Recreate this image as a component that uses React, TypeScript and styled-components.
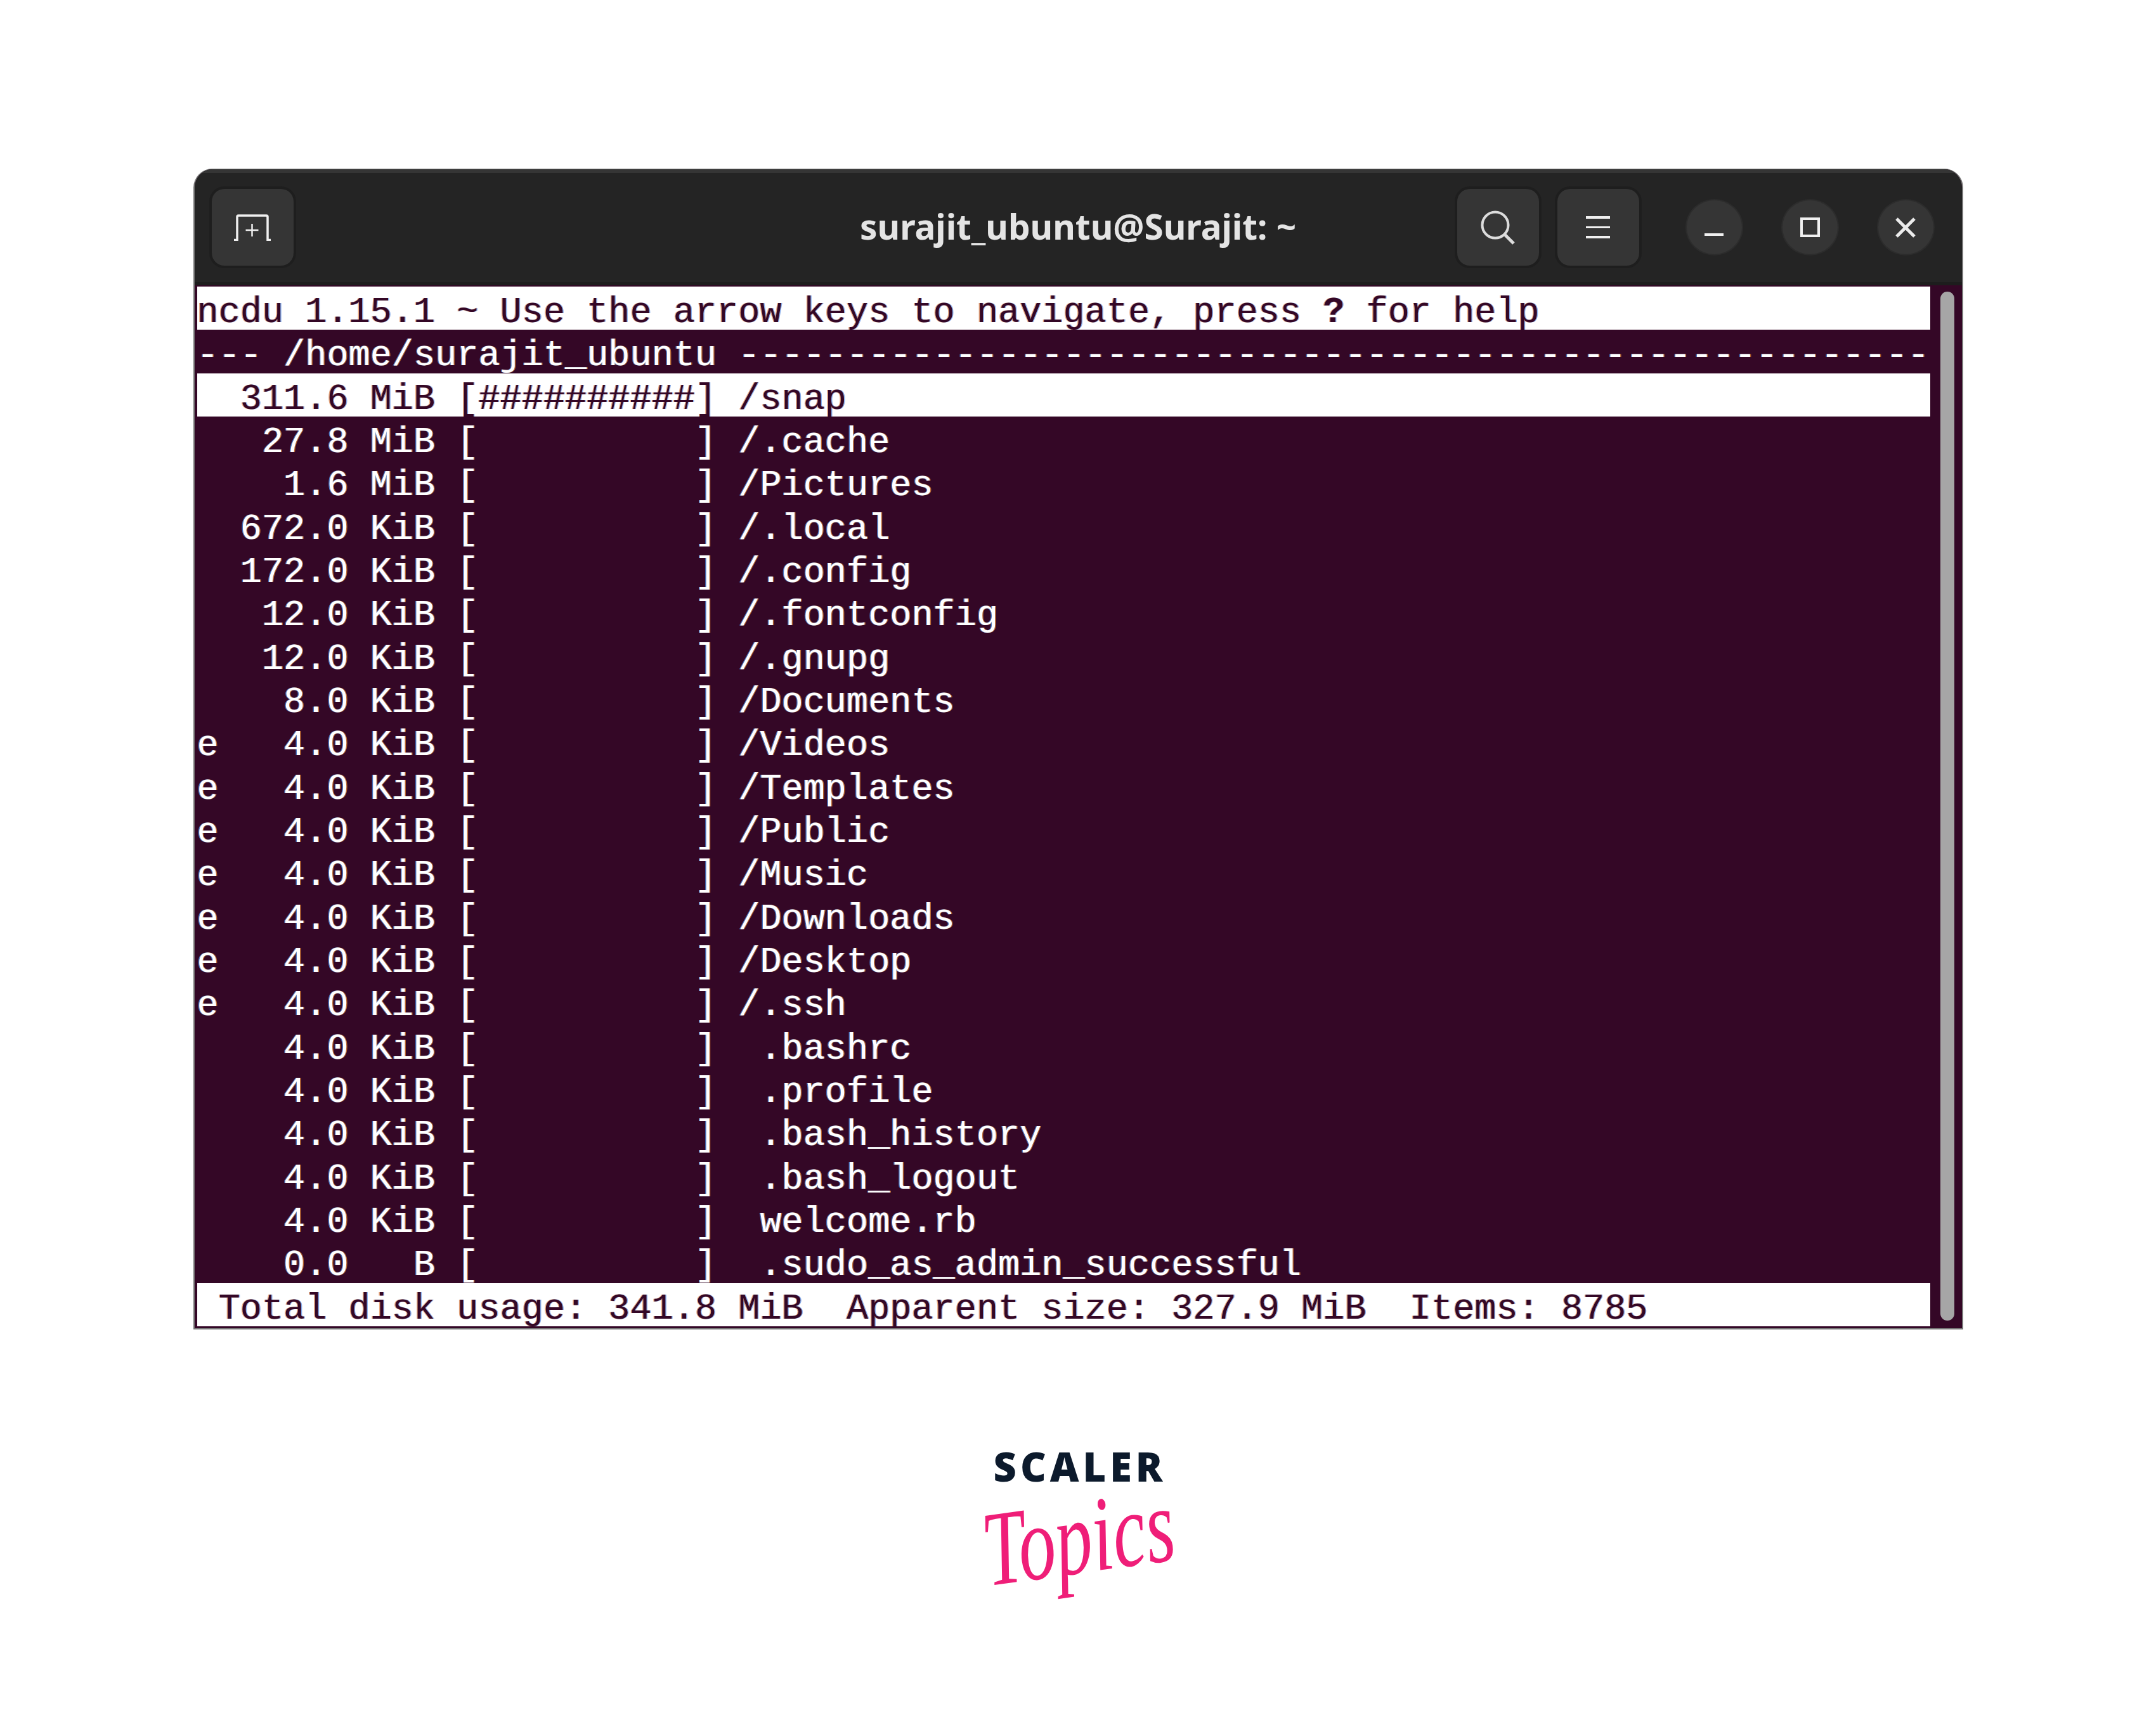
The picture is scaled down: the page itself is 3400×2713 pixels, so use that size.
import React from 'react';
import styled, { createGlobalStyle } from 'styled-components';

const GlobalStyle = createGlobalStyle`
  html, body {
    margin: 0;
    padding: 0;
    background: #fff;
  }
`;

const Page = styled.div`
  width: 3400px;
  height: 2713px;
  padding-top: 266px;
  box-sizing: border-box;
  display: flex;
  flex-direction: column;
  align-items: center;
  overflow: hidden;
`;

const TerminalWindow = styled.div`
  width: 2791px;
  height: 1831px;
  box-sizing: border-box;
  display: flex;
  flex-direction: column;
  border: solid #777;
  border-width: 1px 2px 2px 2px;
  border-radius: 30px 30px 0 0;
  overflow: hidden;
  background: #340726;
`;

const TitleBar = styled.header`
  height: 183px;
  flex: none;
  box-sizing: border-box;
  display: grid;
  grid-template-columns: 1fr auto 1fr;
  align-items: center;
  padding: 0 45px 1px 27px;
  background: #242424;
  border-top: 6px solid #353535;
  border-bottom: 5px solid #1d1d1d;
`;

const TitleLeft = styled.div`
  display: flex;
`;

const TitleRight = styled.div`
  display: flex;
  align-items: center;
  justify-content: flex-end;
`;

const Title = styled.div`
  font-family: 'Noto Sans', 'Open Sans', sans-serif;
  font-weight: 700;
  font-size: 54.8px;
  line-height: 70px;
  padding: 0 0 4px 18px;
  color: #e4e4e4;
  white-space: pre;
`;

const HeaderButton = styled.div<{ $gap?: number }>`
  width: 129px;
  height: 121px;
  margin-left: ${props => props.$gap || 0}px;
  display: flex;
  align-items: center;
  justify-content: center;
  border-radius: 20px;
  background: #353535;
  box-shadow: 0 0 0 4px #1e1e1e;
`;

const WindowControl = styled.div<{ $gap: number }>`
  width: 87px;
  height: 85px;
  margin-left: ${props => props.$gap}px;
  display: flex;
  align-items: center;
  justify-content: center;
  border-radius: 50%;
  background: #353535;
  box-shadow: 0 0 0 2px #2c2c2c;
`;

const TerminalBody = styled.div`
  flex: 1;
  min-height: 0;
  display: flex;
  padding: 2px 12px 2px 4px;
`;

const Screen = styled.div`
  width: 2733px;
  flex: none;
  display: grid;
  grid-auto-rows: 68.33px;
`;

// each row is its own stacking context, so the next row's background hides
// the descenders of the row above, as on a real terminal
const Row = styled.div<{ $light?: boolean }>`
  isolation: isolate;
  font-family: 'Liberation Mono', monospace;
  font-size: 56.92px;
  line-height: 82px;
  height: 68.33px;
  white-space: pre;
  background: ${props => (props.$light ? '#fff' : '#340726')};
  color: ${props => (props.$light ? '#340726' : '#fff')};
  text-shadow: ${props =>
    props.$light
      ? '-1.5px 0 rgba(214, 96, 20, 0.55), 1.5px 0 rgba(40, 110, 220, 0.55)'
      : '-1.5px 0 rgba(80, 160, 255, 0.7), 1.5px 0 rgba(240, 140, 50, 0.7)'};
`;

const Strong = styled.span`
  font-weight: 700;
`;

const ScrollThumb = styled.div`
  width: 22px;
  margin: 8px 0 10px 16px;
  background: #a6a6a6;
  border-radius: 11px;
`;

const Logo = styled.div`
  margin-top: 182px;
  display: flex;
  flex-direction: column;
  align-items: center;
`;

const LogoTop = styled.div`
  font-family: 'Open Sans', 'Noto Sans', sans-serif;
  font-weight: 800;
  font-size: 63px;
  line-height: 68px;
  letter-spacing: 6px;
  margin-right: -6px;
  color: #0c1a2c;
`;

const LogoScript = styled.div`
  font-family: 'Liberation Serif', serif;
  font-style: italic;
  font-size: 168px;
  line-height: 170px;
  margin-top: -8px;
  color: #ef1e78;
  transform: rotate(-8deg) scaleX(0.7);
`;

const NewTabIcon = () => (
  <svg width="58" height="42" viewBox="0 0 58 42" fill="none" stroke="#f0f0f0">
    <path d="M0 40.500h5V4c0-1 .5-2 2-2h44c1.500 0 2 1 2 2v36.500h5" strokeWidth="3.500" />
    <path d="M28.500 15v20M18.500 25h20" strokeWidth="2.500" />
  </svg>
);

const SearchIcon = () => (
  <svg width="54" height="54" viewBox="0 0 54 54" fill="none" stroke="#dcdcdc" strokeWidth="4">
    <circle cx="23" cy="23" r="20.500" />
    <path d="M38 38l14 14" strokeWidth="5" />
  </svg>
);

const MenuIcon = () => (
  <svg width="38" height="35" viewBox="0 0 38 35" fill="#f0f0f0">
    <rect width="38" height="4" y="0" />
    <rect width="38" height="3" y="16" />
    <rect width="38" height="4" y="31" />
  </svg>
);

const MinimizeIcon = () => (
  <svg width="30" height="34" viewBox="0 0 30 34" fill="#f0f0f0">
    <rect width="30" height="4" y="26" />
  </svg>
);

const MaximizeIcon = () => (
  <svg width="31" height="31" viewBox="0 0 31 31" fill="none" stroke="#f0f0f0" strokeWidth="4">
    <rect x="2" y="2" width="27" height="27" />
  </svg>
);

const CloseIcon = () => (
  <svg width="32" height="32" viewBox="0 0 32 32" fill="none" stroke="#ececec" strokeWidth="5">
    <path d="M2 2l28 28M30 2L2 30" />
  </svg>
);

const files = [
  '   27.8 MiB [          ] /.cache',
  '    1.6 MiB [          ] /Pictures',
  '  672.0 KiB [          ] /.local',
  '  172.0 KiB [          ] /.config',
  '   12.0 KiB [          ] /.fontconfig',
  '   12.0 KiB [          ] /.gnupg',
  '    8.0 KiB [          ] /Documents',
  'e   4.0 KiB [          ] /Videos',
  'e   4.0 KiB [          ] /Templates',
  'e   4.0 KiB [          ] /Public',
  'e   4.0 KiB [          ] /Music',
  'e   4.0 KiB [          ] /Downloads',
  'e   4.0 KiB [          ] /Desktop',
  'e   4.0 KiB [          ] /.ssh',
  '    4.0 KiB [          ]  .bashrc',
  '    4.0 KiB [          ]  .profile',
  '    4.0 KiB [          ]  .bash_history',
  '    4.0 KiB [          ]  .bash_logout',
  '    4.0 KiB [          ]  welcome.rb',
  '    0.0   B [          ]  .sudo_as_admin_successful',
];

export default function App() {
  return (
    <>
      <GlobalStyle />
      <Page>
        <TerminalWindow>
          <TitleBar>
            <TitleLeft>
              <HeaderButton>
                <NewTabIcon />
              </HeaderButton>
            </TitleLeft>
            <Title>surajit_ubuntu@Surajit: ~</Title>
            <TitleRight>
              <HeaderButton>
                <SearchIcon />
              </HeaderButton>
              <HeaderButton $gap={29}>
                <MenuIcon />
              </HeaderButton>
              <WindowControl $gap={75}>
                <MinimizeIcon />
              </WindowControl>
              <WindowControl $gap={64}>
                <MaximizeIcon />
              </WindowControl>
              <WindowControl $gap={64}>
                <CloseIcon />
              </WindowControl>
            </TitleRight>
          </TitleBar>
          <TerminalBody>
            <Screen>
              <Row $light>
                ncdu 1.15.1 ~ Use the arrow keys to navigate, press <Strong>?</Strong> for help
              </Row>
              <Row>{'--- /home/surajit_ubuntu ' + '-'.repeat(55)}</Row>
              <Row $light>{'  311.6 MiB [##########] /snap'}</Row>
              {files.map(line => (
                <Row key={line}>{line}</Row>
              ))}
              <Row $light>{' Total disk usage: 341.8 MiB  Apparent size: 327.9 MiB  Items: 8785'}</Row>
            </Screen>
            <ScrollThumb />
          </TerminalBody>
        </TerminalWindow>
        <Logo>
          <LogoTop>SCALER</LogoTop>
          <LogoScript>Topics</LogoScript>
        </Logo>
      </Page>
    </>
  );
}
